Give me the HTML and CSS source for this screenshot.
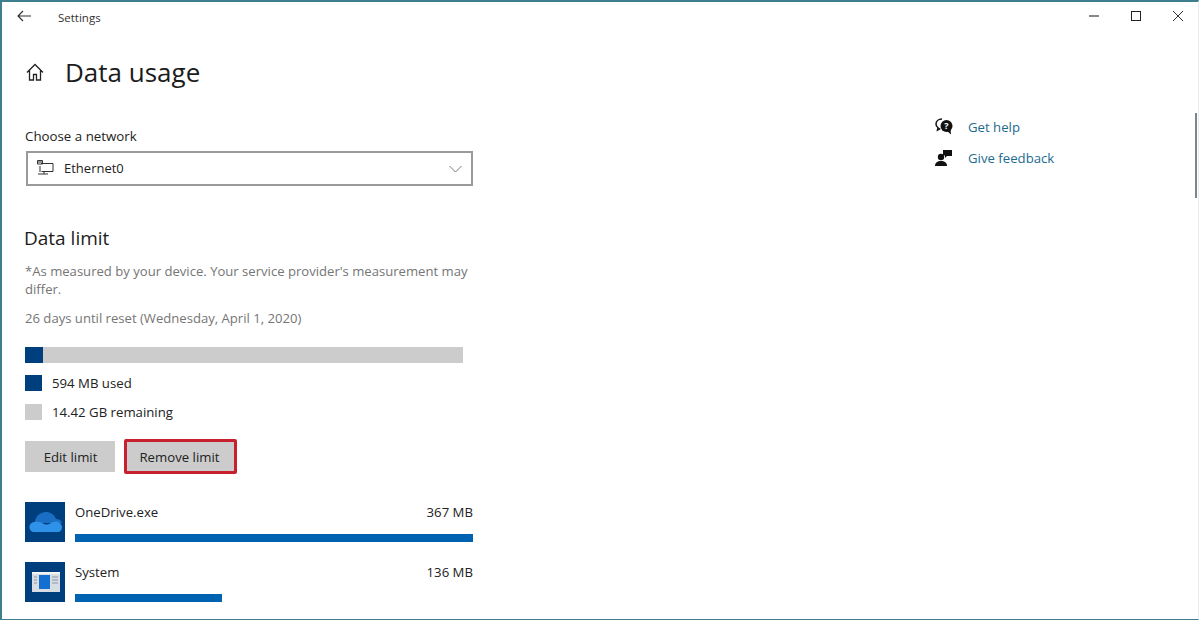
FILE: index.html
```html
<!DOCTYPE html>
<html lang="en">
<head>
<meta charset="utf-8">
<title>Settings</title>
<link rel="stylesheet" href="styles.css">
</head>
<body>
<div class="window">
  <header class="titlebar">
    <svg class="back" width="14" height="12" viewBox="0 0 14 12"><path d="M6 1 1 6l5 5M1 6h13" fill="none" stroke="#333" stroke-width="1.2"/></svg>
    <span class="app-name">Settings</span>
    <div class="controls">
      <svg width="12" height="12" viewBox="0 0 12 12"><path d="M1 6h10" stroke="#555" stroke-width="1.4"/></svg>
      <svg width="12" height="12" viewBox="0 0 12 12"><rect x="1.5" y="1.5" width="9" height="9" fill="none" stroke="#222" stroke-width="1"/></svg>
      <svg width="12" height="12" viewBox="0 0 12 12"><path d="M1 1l10 10M11 1 1 11" stroke="#333" stroke-width="1"/></svg>
    </div>
  </header>
  <div class="page">
    <main class="content">
      <div class="heading">
        <svg class="home" width="18" height="18" viewBox="0 0 18 18"><path d="M1 9.5 9 1.500l8 8M3.500 7.500V17h4v-5.500h3V17h4V7.500" fill="none" stroke="#222" stroke-width="1.300"/></svg>
        <h1>Data usage</h1>
      </div>
      <label class="field-label">Choose a network</label>
      <div class="select">
        <svg class="net" width="17" height="15" viewBox="0 0 17 15"><path d="M4 3.500h12v8H4.500M3 6v6M1 14h10M7 11.500v2.500M.5 .5h5v3.500h-5zM.5 2h5" fill="none" stroke="#333" stroke-width="1"/></svg>
        <span class="select-value">Ethernet0</span>
        <svg class="chev" width="13" height="8" viewBox="0 0 13 8"><path d="M.5 1l6 6 6-6" fill="none" stroke="#777" stroke-width="1"/></svg>
      </div>
      <h2>Data limit</h2>
      <p class="note">*As measured by your device. Your service provider's measurement may differ.</p>
      <p class="note reset">26 days until reset (Wednesday, April 1, 2020)</p>
      <div class="meter"><div class="meter-fill"></div></div>
      <div class="legend"><span class="swatch used"></span>594 MB used</div>
      <div class="legend second"><span class="swatch left"></span>14.42 GB remaining</div>
      <div class="buttons">
        <button class="btn">Edit limit</button>
        <button class="btn marked">Remove limit</button>
      </div>
      <div class="app">
        <div class="app-icon">
          <svg width="40" height="40" viewBox="0 0 40 40">
            <path d="M10 22C9 15 15 10 21 10c4 0 8 2 10 7 3 0 5 1 6 4H10z" fill="#1a6fc4"/>
            <path d="M9 30C6 30 4.500 27.500 4.500 25 4.500 22 7 20 10 20c3-.5 6 .5 9 2 3 1.500 5 0 8-1.500 2-1 5-1.500 7 0 2 1 3 3 3 5 0 2.500-2 4.500-4 4.500z" fill="#2e93e8"/>
          </svg>
        </div>
        <div class="app-body">
          <div class="app-row"><span>OneDrive.exe</span><span>367 MB</span></div>
          <div class="app-track"><div class="app-bar" style="width:100%"></div></div>
        </div>
      </div>
      <div class="app">
        <div class="app-icon">
          <svg width="40" height="40" viewBox="0 0 40 40">
            <rect x="7" y="10" width="28" height="20" fill="#d7dde2"/>
            <rect x="7" y="10" width="28" height="2" fill="#f2f4f6"/>
            <rect x="14" y="13" width="11" height="14" fill="#1470d0"/>
            <path d="M9 15h3M9 18h3M9 21h3M27 15h6M27 18h6M27 21h6" stroke="#8a98a5" stroke-width="1"/>
          </svg>
        </div>
        <div class="app-body">
          <div class="app-row"><span>System</span><span>136 MB</span></div>
          <div class="app-track"><div class="app-bar" style="width:37%"></div></div>
        </div>
      </div>
    </main>
    <aside class="help">
      <a class="help-link">
        <svg width="19" height="18" viewBox="0 0 19 18">
          <path d="M7 1C3.500 1 1 3.200 1 6c0 1.500.8 2.800 2 3.700L2.500 12l2.800-1.500" fill="none" stroke="#111" stroke-width="1.500"/>
          <circle cx="11.500" cy="8" r="6" fill="#111"/>
          <path d="M12 13l4 3.500-.5-5z" fill="#111"/>
          <text x="11.500" y="11" class="q">?</text>
        </svg>
        <span>Get help</span>
      </a>
      <a class="help-link">
        <svg width="19" height="18" viewBox="0 0 19 18">
          <circle cx="6" cy="8" r="3.200" fill="#111"/>
          <path d="M0 17c0-3.500 2.500-5 6-5s6 1.500 6 5z" fill="#111"/>
          <path d="M8 1h9v6h-5l-2 2V6.500H8z" fill="#111"/>
        </svg>
        <span>Give feedback</span>
      </a>
    </aside>
  </div>
  <div class="scrollbar"></div>
</div>
</body>
</html>
```

FILE: styles.css
```css
* { box-sizing: border-box; }
html, body { margin: 0; height: 100%; }
body {
  background: #fff;
  color: #222;
  font-family: "Open Sans", "Noto Sans", sans-serif;
  overflow: hidden;
}
.window {
  position: relative;
  width: 1199px;
  height: 620px;
  border: 1px solid #3d7f8f;
  border-top-width: 2px;
  border-left-width: 2px;
  border-right-color: #e6eef0;
  overflow: hidden;
}
.titlebar {
  display: flex;
  align-items: center;
  height: 30px;
  padding-left: 15px;
}
.back { margin-top: -3px; }
.app-name { margin-left: 27px; font-size: 11.500px; color: #333; }
.controls {
  margin-left: auto;
  margin-right: 14px;
  display: flex;
  gap: 30px;
  align-items: center;
  margin-top: -2px;
}
.page { display: flex; }
.content {
  width: 473px;
  padding-left: 23px;
  flex: none;
}
.heading {
  display: flex;
  align-items: center;
  height: 42px;
  margin-top: 19px;
}
.home { margin-left: 1px; }
h1 {
  margin: 0 0 0 21px;
  font-size: 26px;
  font-weight: 400;
  line-height: 42px;
  color: #1c1c1c;
}
.field-label {
  display: block;
  margin-top: 33px;
  font-size: 13.300px;
  line-height: 20px;
}
.select {
  display: flex;
  align-items: center;
  width: 447px;
  height: 35px;
  margin-top: 5px;
  margin-left: 1px;
  padding: 0 9px;
  border: 2px solid #9a9a9a;
}
.select-value { margin-left: 10px; font-size: 13px; position: relative; top: -1px; }
.net { position: relative; top: -1px; }
.chev { margin-left: auto; }
h2 {
  margin: 38px 0 0 -1px;
  font-size: 19px;
  font-weight: 400;
  line-height: 28px;
  color: #1c1c1c;
}
.note {
  margin: 10px 0 0;
  width: 448px;
  font-size: 13.100px;
  line-height: 18px;
  color: #757575;
}
.reset { margin-top: 11px; }
.meter {
  width: 438px;
  height: 16px;
  margin-top: 20px;
  background: #cccccc;
}
.meter-fill { width: 18px; height: 100%; background: #003f7d; }
.legend {
  display: flex;
  align-items: center;
  gap: 10px;
  margin-top: 12px;
  height: 16px;
  font-size: 13.200px;
}
.legend.second { margin-top: 13px; }
.swatch { width: 17px; height: 16px; }
.used { background: #003f7d; }
.left { background: #cccccc; }
.buttons {
  display: flex;
  align-items: center;
  gap: 9px;
  margin-top: 19px;
}
.btn {
  width: 90px;
  height: 31px;
  border: 0;
  padding: 0 0 0 1px;
  background: #cccccc;
  color: #222;
  font: 13.200px "Open Sans", "Noto Sans", sans-serif;
}
.marked {
  width: 113px;
  height: 35px;
  padding: 0 2px 0 0;
  border: 3px solid #c8202f;
  border-radius: 2px;
}
.app {
  display: flex;
  gap: 10px;
  height: 40px;
  margin-bottom: 20px;
}
.buttons + .app { margin-top: 28px; }
.app-icon { width: 40px; height: 40px; background: #003f7d; flex: none; }
.app-icon svg { display: block; }
.app-body { width: 398px; display: flex; flex-direction: column; }
.app-row {
  display: flex;
  justify-content: space-between;
  font-size: 13.200px;
  line-height: 20px;
}
.app-track { margin-top: auto; height: 8px; }
.app-bar { height: 100%; background: #0063b1; }
.help {
  margin-left: 460px;
  padding-top: 85px;
  display: flex;
  flex-direction: column;
  gap: 11px;
}
.help-link {
  display: flex;
  align-items: center;
  gap: 14px;
  height: 20px;
  font-size: 13.200px;
  color: #1d6a8f;
}
.q { font: 700 9px "Open Sans", sans-serif; fill: #fff; text-anchor: middle; }
.scrollbar {
  position: absolute;
  right: 1px;
  top: 111px;
  width: 2px;
  height: 85px;
  background: #7d8690;
}
```
